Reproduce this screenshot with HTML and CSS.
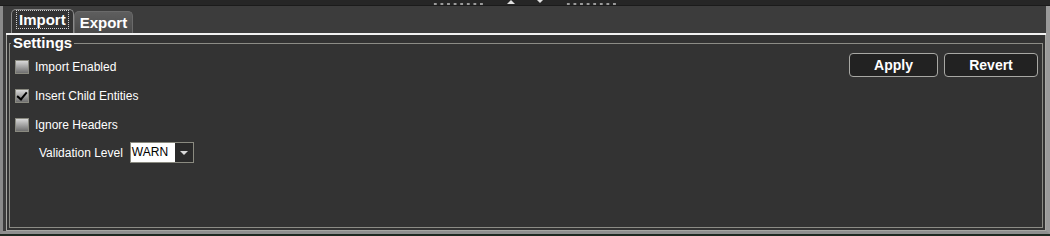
FILE: index.html
```
<!DOCTYPE html>
<html lang="en">
    <head>
        <meta charset="UTF-8" />
        <title>Import / Export</title>
        <link rel="stylesheet" href="styles.css">
    </head>
    <body>
        <div class="splitter">
            <span class="dots"></span>
            <span class="arrow-up"></span>
            <span class="arrow-down"></span>
            <span class="dots"></span>
        </div>
        <div class="window">
            <div class="tabs">
                <span class="tab active"><span class="focus">Import</span></span>
                <span class="tab">Export</span>
            </div>
            <div class="panel">
                <fieldset class="settings">
                    <legend>Settings</legend>
                    <div class="body">
                        <div class="options">
                            <label class="check"><span class="box"></span>Import Enabled</label>
                            <label class="check"><span class="box checked"></span>Insert Child Entities</label>
                            <label class="check"><span class="box"></span>Ignore Headers</label>
                            <div class="level">
                                <span>Validation Level</span>
                                <span class="combo">
                                    <span class="combo-text">WARN</span>
                                    <span class="combo-btn"></span>
                                </span>
                            </div>
                        </div>
                        <div class="actions">
                            <button class="btn">Apply</button>
                            <button class="btn">Revert</button>
                        </div>
                    </div>
                </fieldset>
            </div>
        </div>
    </body>
</html>
```
FILE: styles.css
```
html, body {
    margin: 0;
    padding: 0;
}

body {
    width: 1050px;
    height: 236px;
    background-color: #1f2a22;
    font-family: "Liberation Sans", Arial, sans-serif;
    color: #fff;
    overflow: hidden;
}

.splitter {
    height: 5px;
    background-color: #262626;
    border-bottom: 1px solid #1b1b1b;
    display: flex;
    justify-content: center;
    align-items: center;
    gap: 22px;
}

.dots {
    width: 53px;
    height: 2px;
    background-image: radial-gradient(circle, #9a9a9a 45%, transparent 55%);
    background-size: 6.6px 2px;
    margin-top: 2px;
}

.arrow-up {
    width: 0;
    height: 0;
    border-left: 4px solid transparent;
    border-right: 4px solid transparent;
    border-bottom: 4px solid #e0e0e0;
    margin-top: -1px;
}

.arrow-down {
    width: 0;
    height: 0;
    border-left: 3px solid transparent;
    border-right: 3px solid transparent;
    border-top: 3px solid #e0e0e0;
    margin-top: -2px;
}

.window {
    height: 228px;
    background-color: #3c3c3c;
    border-left: 3px solid #8a8a8a;
    border-right: 4px solid #9a9a9a;
    border-bottom: 3px solid #8f8f8f;
    box-sizing: border-box;
    display: flex;
    flex-direction: column;
}

.tabs {
    display: flex;
    align-items: flex-end;
    padding: 4px 0 0 5px;
    height: 29px;
    box-sizing: border-box;
    border-bottom: 2px solid #f2f2f2;
    margin-left: 3px;
}

.tab {
    font-size: 15px;
    font-weight: bold;
    color: #fff;
    padding: 0 5px;
    height: 21px;
    line-height: 22px;
    border: 1px solid #6a6a6a;
    border-bottom: none;
    border-radius: 5px 5px 0 0;
    background: linear-gradient(#5e5e5e, #4a4a4a);
}

.tab.active {
    height: 23px;
    line-height: 20px;
    padding: 0 4px;
    background: #333333;
    border-color: #8a8a8a;
}

.focus {
    display: inline-block;
    line-height: 17px;
    padding: 0 2px;
    border: 1px dotted #d0d0d0;
}

.panel {
    flex: 1;
    background-color: #333333;
    margin-left: 3px;
    padding: 0 2px 2px 2px;
    border-left: 1px solid #a8a8a4;
    border-bottom: 1px solid #a8a8a4;
    border-right: 1px solid #a8a8a4;
    display: flex;
}

.settings {
    flex: 1;
    margin: 0;
    padding: 0 4px;
    border: 1px solid #8c8c86;
    min-width: 0;
}

.settings legend {
    font-size: 15px;
    font-weight: bold;
    padding: 0 2px;
    margin-left: -3px;
    line-height: 16px;
}

.body {
    display: flex;
    justify-content: space-between;
}

.options {
    display: flex;
    flex-direction: column;
    padding-top: 7px;
}

.check {
    display: flex;
    align-items: center;
    font-size: 12px;
    height: 29px;
    gap: 6px;
    margin-top: -6px;
    margin-bottom: 6px;
    padding-left: 1px;
}

.box {
    width: 12px;
    height: 12px;
    border: 1px solid #8a8a80;
    background: linear-gradient(#d8d8d8, #6e6e6e);
    position: relative;
}

.box.checked::after {
    content: "";
    position: absolute;
    left: 3px;
    top: 0px;
    width: 4px;
    height: 8px;
    border-right: 2px solid #000;
    border-bottom: 2px solid #000;
    transform: rotate(40deg);
}

.level {
    display: flex;
    align-items: center;
    gap: 7px;
    font-size: 12px;
    padding-left: 25px;
    margin-top: -3px;
}

.combo {
    display: flex;
    height: 19px;
    border: 1px solid #8a8a80;
}

.combo-text {
    width: 43px;
    background: #fff;
    color: #000;
    font-size: 12px;
    line-height: 19px;
    padding-left: 1px;
}

.combo-btn {
    width: 18px;
    background: #2a2a2a;
    position: relative;
}

.combo-btn::after {
    content: "";
    position: absolute;
    left: 5px;
    top: 8px;
    border-left: 4px solid transparent;
    border-right: 4px solid transparent;
    border-top: 4px solid #d8d8d8;
}

.actions {
    display: flex;
    gap: 6px;
    padding-top: 2px;
    padding-right: 0;
    align-items: flex-start;
}

.btn {
    font-family: "Liberation Sans", Arial, sans-serif;
    font-size: 14px;
    font-weight: bold;
    color: #fff;
    background: #222222;
    border: 1px solid #a8a8a4;
    border-radius: 4px;
    height: 24px;
    padding: 0;
}

.btn:first-child {
    width: 89px;
}

.btn:last-child {
    width: 94px;
}
```
